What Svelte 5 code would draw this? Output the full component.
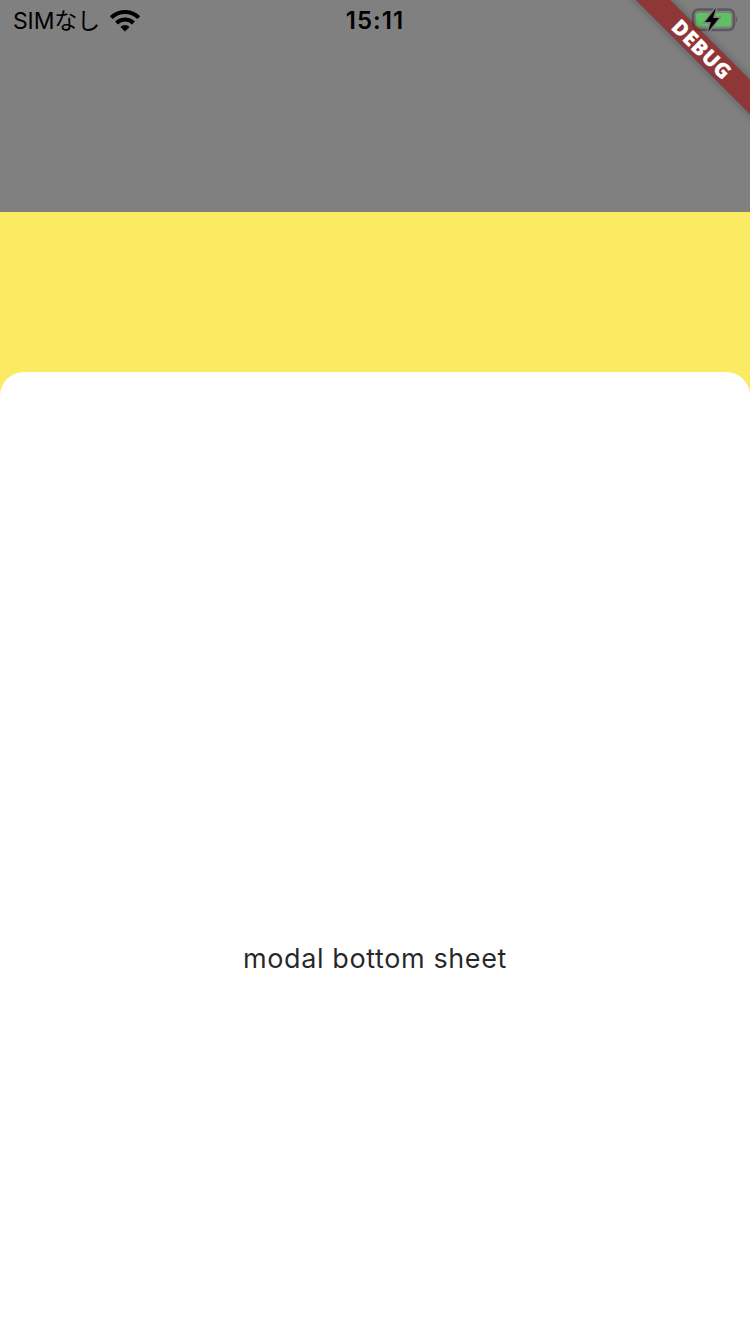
<script>
  const title = 'modal bottom sheet';
</script>

<div class="page">
  <div class="scrim">
    <div class="status">
      <div class="left">
        <span class="carrier">SIMなし</span>
        <svg class="wifi" width="30" height="22" viewBox="0 0 30 22" aria-hidden="true">
          <path d="M1.2 7.7 A19.5 19.5 0 0 1 28.8 7.7" fill="none" stroke="#000" stroke-width="4"/>
          <path d="M6.5 13 A12 12 0 0 1 23.5 13" fill="none" stroke="#000" stroke-width="4"/>
          <path d="M15 21.5 L10.4 16.9 A6.5 6.5 0 0 1 19.6 16.9 Z" fill="#000"/>
        </svg>
      </div>
      <span class="time">15:11</span>
      <div class="right">
        <svg class="battery" width="46" height="26" viewBox="0 0 46 26" aria-hidden="true">
          <rect x="2" y="1.5" width="41" height="20.5" rx="5.5" fill="none" stroke="#5a5a5a" stroke-width="2.5"/>
          <rect x="5" y="5" width="35" height="13.5" rx="2.5" fill="#5ec262"/>
          <path d="M44.8 8.5 v6 c1 -.4 1.4 -1.6 1.4 -3 s-.4 -2.6 -1.4 -3z" fill="#5a5a5a"/>
          <path d="M25 0 L14 14 H20 L17 24 L28 10 H22 Z" fill="#000" stroke="#808080" stroke-width="3" paint-order="stroke"/>
        </svg>
      </div>
    </div>
  </div>
  <div class="yellow"></div>
  <div class="sheet">
    <p class="label">{title}</p>
  </div>
  <div class="banner"><span>DEBUG</span></div>
</div>

<style>
  :global(body) {
    margin: 0;
    background: #fff;
  }
  .page {
    position: relative;
    width: 750px;
    height: 1334px;
    overflow: hidden;
    display: flex;
    flex-direction: column;
    background: #fbeb62;
    font-family: Inter, "Noto Sans CJK JP", sans-serif;
  }
  .scrim {
    height: 212px;
    flex: none;
    background: #808080;
  }
  .status {
    height: 40px;
    box-sizing: content-box;
    padding: 1px 13px 0;
    display: grid;
    grid-template-columns: 1fr auto 1fr;
    align-items: center;
    color: #000;
  }
  .left {
    display: flex;
    align-items: center;
    gap: 10px;
  }
  .carrier {
    font-size: 23px;
    line-height: 30px;
    letter-spacing: -0.15px;
  }
  .wifi {
    margin-top: -1px;
  }
  .time {
    font-size: 24px;
    font-weight: 600;
    line-height: 30px;
    letter-spacing: 1.1px;
  }
  .right {
    display: flex;
    justify-content: flex-end;
  }
  .battery {
    overflow: visible;
  }
  .yellow {
    height: 160px;
    flex: none;
  }
  .sheet {
    flex: 1;
    background: #fff;
    border-radius: 24px 24px 0 0;
    padding-top: 570px;
    display: flex;
    justify-content: center;
  }
  .label {
    margin: 0;
    font-size: 27px;
    line-height: 34px;
    letter-spacing: 0.6px;
    color: rgba(0, 0, 0, 0.85);
    height: 34px;
  }
  .banner {
    position: absolute;
    left: 602px;
    top: 36.5px;
    width: 200px;
    height: 24px;
    transform: rotate(45deg);
    background: rgba(150, 15, 15, 0.66);
    box-shadow: 0 0 8px rgba(0, 0, 0, 0.32);
    display: flex;
    align-items: center;
    justify-content: center;
  }
  .banner span {
    font-family: "Open Sans", sans-serif;
    font-weight: 800;
    font-size: 21px;
    line-height: 24px;
    letter-spacing: 0.4px;
    color: #fff;
  }
</style>
